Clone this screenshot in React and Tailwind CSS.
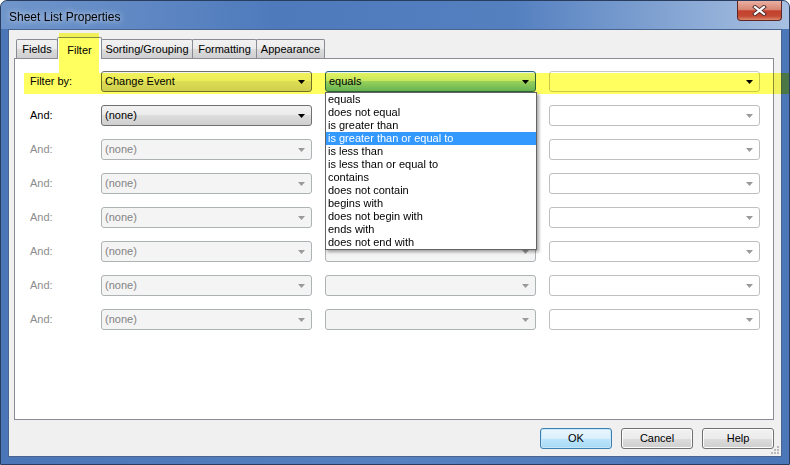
import React from 'react';

const OPERATORS = [
  'equals',
  'does not equal',
  'is greater than',
  'is greater than or equal to',
  'is less than',
  'is less than or equal to',
  'contains',
  'does not contain',
  'begins with',
  'does not begin with',
  'ends with',
  'does not end with',
];

const Arrow = ({ dim }) => (
  <svg width="7" height="4" viewBox="0 0 7 4" className="shrink-0">
    <path d="M0 0h7L3.5 4z" fill={dim ? '#9a9a9a' : '#000'} />
  </svg>
);

const comboStyles = {
  normal: 'border-[#707070] bg-[linear-gradient(#f2f2f2,#ebebeb_50%,#dddddd_50%,#cfcfcf)] text-black',
  pressed: 'border-[#2c628b] bg-[linear-gradient(#e5f4fc,#c4e5f6_50%,#98d1ef_50%,#68b3db)] text-black',
  disabled: 'border-[#adb2b5] bg-[#f4f4f4] text-[#838383]',
  blank: 'border-[#bfbfbf] bg-white',
  blankDark: 'border-[#c8c8c8] bg-white',
};

const Combo = ({ kind = 'normal', text = '', children }) => (
  <div className={`relative w-[211px] h-[21px] shrink-0 rounded-[3px] border flex items-center pl-[3px] pr-[6px] ${comboStyles[kind]}`}>
    <span className="flex-1 truncate leading-none">{text}</span>
    <Arrow dim={kind === 'disabled' || kind === 'blank'} />
    {children}
  </div>
);

const Tab = ({ label, selected, w }) => (
  <div
    className={
      selected
        ? `relative z-10 -mb-px h-[22px] ${w} -ml-px border border-b-0 border-[#898c95] bg-white rounded-t-[2px] flex items-start justify-center pt-[4px]`
        : `h-[19px] ${w} -ml-px border border-b-0 border-[#898c95] bg-[linear-gradient(#f2f2f2,#ebebeb_50%,#dddddd_50%,#cfcfcf)] rounded-t-[2px] flex items-center justify-center pt-[1px]`
    }
  >
    {label}
  </div>
);

const Button = ({ label, primary }) => (
  <button
    className={
      primary
        ? 'w-[72px] h-[21px] rounded-[3px] border border-[#3c7fb1] bg-[linear-gradient(#eaf6fd,#d9f0fc_50%,#bee6fd_50%,#a7d9f5)] shadow-[inset_0_0_0_1px_#c7e6f8] text-black text-[11px]'
        : 'w-[72px] h-[21px] rounded-[3px] border border-[#707070] bg-[linear-gradient(#f2f2f2,#ebebeb_50%,#dddddd_50%,#cfcfcf)] shadow-[inset_0_0_0_1px_#fcfcfc] text-black text-[11px]'
    }
  >
    {label}
  </button>
);

const DropList = () => (
  <div className="absolute left-[-1px] top-[20px] z-30 w-[212px] border border-[#646464] bg-white shadow-[2px_2px_3px_rgba(0,0,0,0.35)]">
    {OPERATORS.map((op, i) => (
      <div
        key={op}
        className={`h-[13px] leading-[13px] pl-[2px] text-[11px] ${i === 3 ? 'bg-[#3399ff] text-white' : 'text-black'}`}
      >
        {op}
      </div>
    ))}
  </div>
);

export default function App() {
  const rows = [2, 3, 4, 5, 6, 7, 8];

  return (
    <div className="relative w-[790px] h-[465px] overflow-hidden rounded-t-[7px] border border-[#2b3d5e] bg-[linear-gradient(90deg,#4a76b8,#5581c0_50%,#4b77b9)] font-['Liberation_Sans',Arial,sans-serif] text-[11px] text-black flex flex-col">
      {/* title bar */}
      <div className="h-[28px] shrink-0 flex items-start justify-between bg-[linear-gradient(90deg,#7096cb,#4e7abc_35%,#5480c0_65%,#a8c0e1)]">
        <span className="pl-[8px] pt-[7px] text-[12px] text-black [text-shadow:0_0_6px_#ffffff]">Sheet List Properties</span>
        <div className="mr-[7px] w-[45px] h-[20px] rounded-b-[4px] border border-t-0 border-[#5e2725] bg-[linear-gradient(#eab0a3,#d78673_45%,#c4402e_52%,#c44a34_80%,#de8a6c)] flex items-center justify-center">
          <svg width="15" height="11" viewBox="0 0 15 11">
            <path d="M3 2l9 7M12 2l-9 7" stroke="#4a2a2a" strokeWidth="4" strokeLinecap="square" />
            <path d="M3 2l9 7M12 2l-9 7" stroke="#ffffff" strokeWidth="2.2" strokeLinecap="square" />
          </svg>
        </div>
      </div>

      {/* client area */}
      <div className="relative mx-[7px] h-[428px] border border-[#48648f] bg-[#f0f0f0] pl-[5px] pr-[7px] pt-[7px] flex flex-col">
        <div className="h-[21px] flex items-end pl-[3px]">
          <Tab label="Fields" w="w-[42px]" />
          <Tab label="Filter" w="w-[45px]" selected />
          <Tab label="Sorting/Grouping" w="w-[92px]" />
          <Tab label="Formatting" w="w-[65px]" />
          <Tab label="Appearance" w="w-[69px]" />
        </div>

        <div className="h-[362px] border border-[#898c95] bg-white pt-[12px] pl-[15px] flex flex-col gap-[13px]">
          <div className="h-[21px] flex items-center">
            <span className="w-[71px] shrink-0">Filter by:</span>
            <div className="flex gap-[13px]">
              <Combo kind="normal" text="Change Event" />
              <Combo kind="pressed" text="equals">
                <DropList />
              </Combo>
              <Combo kind="blankDark" />
            </div>
          </div>

          {rows.map((r) => (
            <div key={r} className="h-[21px] flex items-center">
              <span className={`w-[71px] shrink-0 ${r === 2 ? 'text-black' : 'text-[#8d8d8d]'}`}>And:</span>
              <div className="flex gap-[13px]">
                <Combo kind={r === 2 ? 'normal' : 'disabled'} text="(none)" />
                <Combo kind="disabled" />
                <Combo kind="blank" />
              </div>
            </div>
          ))}
        </div>

        <div className="mt-[8px] flex justify-end gap-[9px]">
          <Button label="OK" primary />
          <Button label="Cancel" />
          <Button label="Help" />
        </div>

        <svg width="10" height="10" viewBox="0 0 10 10" className="absolute right-[1px] bottom-[1px]">
          <g fill="#b8b8b8">
            <rect x="7" y="1" width="2" height="2" />
            <rect x="4" y="4" width="2" height="2" />
            <rect x="7" y="4" width="2" height="2" />
            <rect x="1" y="7" width="2" height="2" />
            <rect x="4" y="7" width="2" height="2" />
            <rect x="7" y="7" width="2" height="2" />
          </g>
        </svg>
      </div>

      {/* highlighter marks */}
      <div className="pointer-events-none absolute z-20 left-[58px] top-[32px] w-[40px] h-[40px] bg-[#ffff60] mix-blend-multiply" />
      <div className="pointer-events-none absolute z-20 left-[23px] top-[72px] w-[767px] h-[21px] bg-[#ffff60] mix-blend-multiply" />
    </div>
  );
}
